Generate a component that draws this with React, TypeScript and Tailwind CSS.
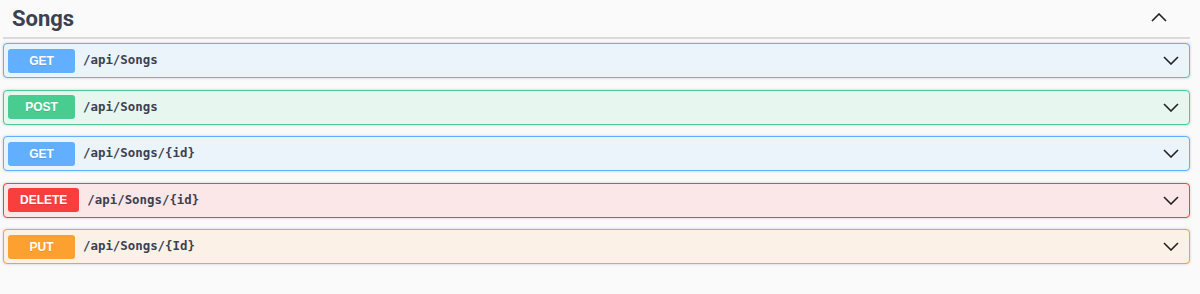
import * as React from "react";

type Op = {
	method: string;
	path: string;
	badge: string;
	bg: string;
	border: string;
};

const OPS: Op[] = [
	{ method: "GET", path: "/api/Songs", badge: "bg-[#61affe]", bg: "bg-[#ebf3fb]", border: "border-[#61affe]" },
	{ method: "POST", path: "/api/Songs", badge: "bg-[#49cc90]", bg: "bg-[#e8f6f0]", border: "border-[#49cc90]" },
	{ method: "GET", path: "/api/Songs/{id}", badge: "bg-[#61affe]", bg: "bg-[#ebf3fb]", border: "border-[#61affe]" },
	{ method: "DELETE", path: "/api/Songs/{id}", badge: "bg-[#f93e3e]", bg: "bg-[#fbe7e7]", border: "border-[#f93e3e]" },
	{ method: "PUT", path: "/api/Songs/{Id}", badge: "bg-[#fca130]", bg: "bg-[#fbf1e6]", border: "border-[#fca130]" },
];

const Chevron: React.FC<{ up?: boolean }> = ({ up }) => (
	<svg width="16" height="9" viewBox="0 0 16 9" fill="none" className="block">
		<polyline
			points={up ? "1,8 8,1 15,8" : "1,1 8,8 15,1"}
			stroke="#222"
			strokeWidth="1.6"
			strokeLinejoin="miter"
		/>
	</svg>
);

const OpRow: React.FC<{ op: Op }> = ({ op }) => (
	<div
		className={`flex h-[35px] items-center rounded-[4px] border px-[4px] shadow-[0_0_3px_rgba(0,0,0,0.19)] ${op.bg} ${op.border}`}
	>
		<span
			className={`flex h-[24px] min-w-[67px] items-center justify-center rounded-[3px] px-3 font-['Liberation_Sans',sans-serif] text-[12px] font-bold text-white [text-shadow:0_1px_0_rgba(0,0,0,0.1)] ${op.badge}`}
		>
			{op.method}
		</span>
		<span className="ml-[8px] font-['DejaVu_Sans_Mono',monospace] text-[12.4px] font-semibold text-[#3b4151]">
			{op.path}
		</span>
		<span className="ml-auto mr-[6px]">
			<Chevron />
		</span>
	</div>
);

export default function App() {
	return (
		<div className="h-[294px] w-full bg-[#fafafa]">
			<div className="ml-[3px] w-[1187px]">
				{/* tag header */}
				<div className="flex h-[39px] items-center border-b-2 border-[#d9dadc] pl-[9px] pr-[23px]">
					<h3 className="font-['Roboto',sans-serif] text-[22px] font-bold leading-none text-[#3b4151]">Songs</h3>
					<span className="ml-auto mb-[2px]">
						<Chevron up />
					</span>
				</div>

				<div className="mt-[4px] flex flex-col gap-[11.5px]">
					{OPS.map((op, i) => (
						<OpRow key={i} op={op} />
					))}
				</div>
			</div>
		</div>
	);
}
